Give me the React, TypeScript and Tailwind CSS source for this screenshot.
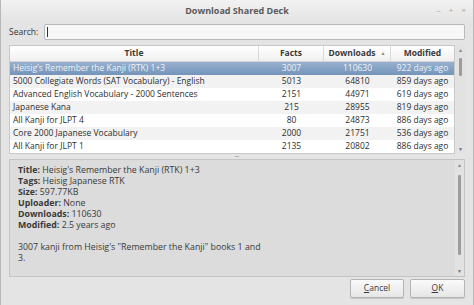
import React from "react";

const rows = [
  { title: "Heisig's Remember the Kanji (RTK) 1+3", facts: "3007", downloads: "110630", modified: "922 days ago" },
  { title: "5000 Collegiate Words (SAT Vocabulary) - English", facts: "5013", downloads: "64810", modified: "859 days ago" },
  { title: "Advanced English Vocabulary - 2000 Sentences", facts: "2151", downloads: "44971", modified: "619 days ago" },
  { title: "Japanese Kana", facts: "215", downloads: "28955", modified: "819 days ago" },
  { title: "All Kanji for JLPT 4", facts: "80", downloads: "24873", modified: "886 days ago" },
  { title: "Core 2000 Japanese Vocabulary", facts: "2000", downloads: "21751", modified: "536 days ago" },
  { title: "All Kanji for JLPT 1", facts: "2135", downloads: "20802", modified: "886 days ago" },
];

const details = [
  ["Title:", "Heisig's Remember the Kanji (RTK) 1+3"],
  ["Tags:", "Heisig Japanese RTK"],
  ["Size:", "597.77KB"],
  ["Uploader:", "None"],
  ["Downloads:", "110630"],
  ["Modified:", "2.5 years ago"],
];

const ScrollBar = ({ thumbTop, thumbHeight }: { thumbTop: string; thumbHeight: string }) => (
  <div className="w-[9px] flex flex-col items-center bg-[#e2e2e2]">
    <span className="text-[5px] leading-[8px] text-[#8a8a8a] mt-[1px]">▲</span>
    <div className="flex-1 w-full relative">
      <div className={`absolute left-[3px] w-[3px] rounded-[1px] bg-[#9c9c9c] ${thumbTop} ${thumbHeight}`} />
    </div>
    <span className="text-[5px] leading-[8px] text-[#6a6a6a] mb-[1px]">▼</span>
  </div>
);

export default function App() {
  return (
    <div className="w-[474px] h-[305px] bg-[#e4e4e4] flex flex-col font-['Open_Sans','Noto_Sans',sans-serif] text-[#2e2e2e] border-x border-[#b8b8b8] overflow-hidden">
      {/* title bar */}
      <div className="h-[21px] relative flex items-center justify-center bg-gradient-to-b from-[#f2f2f2] to-[#e4e4e4]">
        <span className="text-[9px] font-bold text-[#5a5a5a]">Download Shared Deck</span>
        <div className="absolute right-[7px] top-[4px] flex gap-[8px] text-[8px] text-[#a8a8a8]">
          <span>–</span>
          <span>+</span>
          <span>×</span>
        </div>
      </div>

      {/* search */}
      <div className="flex items-center px-[8px] mt-[3px] gap-[6px]">
        <span className="text-[8.5px] text-[#333]">Search:</span>
        <div className="flex-1 h-[16px] bg-[#f7f7f7] border border-[#b9b9b9] rounded-[2px] flex items-center pl-[2px]">
          <div className="w-px h-[10px] bg-[#333]" />
        </div>
      </div>

      {/* table */}
      <div className="mx-[8px] mt-[5px] h-[109px] flex gap-[1px]">
        <div className="flex-1 bg-white border border-[#c8c8c8] flex flex-col text-[8.5px]">
          <div className="h-[16px] flex font-bold text-[#3a3a3a] bg-gradient-to-b from-white to-[#f1f1f1] border-b border-[#d4d4d4]">
            <div className="w-[249px] flex items-center justify-center border-r border-[#dadada]">Title</div>
            <div className="w-[65px] flex items-center justify-center border-r border-[#dadada]">Facts</div>
            <div className="w-[67px] flex items-center justify-center border-r border-[#dadada] gap-[5px]">
              Downloads<span className="text-[5px] text-[#8a8a8a]">▲</span>
            </div>
            <div className="flex-1 flex items-center justify-center">Modified</div>
          </div>
          {rows.map((r, i) => (
            <div
              key={r.title}
              className={`h-[13px] flex items-center ${
                i === 0
                  ? "bg-gradient-to-b from-[#98b1cf] to-[#7394b9] text-[#eef3f8]"
                  : i % 2 === 1
                  ? "bg-[#f2f2f2]"
                  : "bg-white"
              }`}
            >
              <div className="w-[249px] pl-[3px] truncate">{r.title}</div>
              <div className="w-[65px] text-center">{r.facts}</div>
              <div className="w-[67px] text-center">{r.downloads}</div>
              <div className="flex-1 text-center">{r.modified}</div>
            </div>
          ))}
        </div>
        <ScrollBar thumbTop="top-[4px]" thumbHeight="h-[18px]" />
      </div>

      {/* splitter */}
      <div className="h-[5px] flex items-center justify-center">
        <div className="w-[4px] h-px bg-[#b0b0b0]" />
      </div>

      {/* details */}
      <div className="mx-[8px] h-[118px] flex bg-[#dcdcdc] border border-[#c4c4c4]">
        <div className="flex-1 pl-[8px] pt-[5px] text-[8.8px] leading-[11px] text-[#3a3a3a]">
          {details.map(([k, v]) => (
            <div key={k}>
              <span className="font-bold">{k}</span> {v}
            </div>
          ))}
          <div className="mt-[11px] whitespace-nowrap">
            3007 kanji from Heisig's "Remember the Kanji" books 1 and
            <br />
            3.
          </div>
        </div>
        <ScrollBar thumbTop="top-[6px]" thumbHeight="h-[80px]" />
      </div>

      {/* buttons */}
      <div className="flex justify-end gap-[6px] px-[8px] mt-[2px]">
        <button className="w-[54px] h-[19px] text-[8.5px] text-[#3a3a3a] border border-[#b4b4b4] rounded-[2px] bg-gradient-to-b from-[#fafafa] to-[#e6e6e6] shadow-[0_1px_0_#c8c8c8]">
          <span className="underline">C</span>ancel
        </button>
        <button className="w-[55px] h-[19px] text-[8.5px] text-[#3a3a3a] border border-[#b4b4b4] rounded-[2px] bg-gradient-to-b from-[#fafafa] to-[#e6e6e6] shadow-[0_1px_0_#c8c8c8]">
          <span className="underline">O</span>K
        </button>
      </div>
    </div>
  );
}
